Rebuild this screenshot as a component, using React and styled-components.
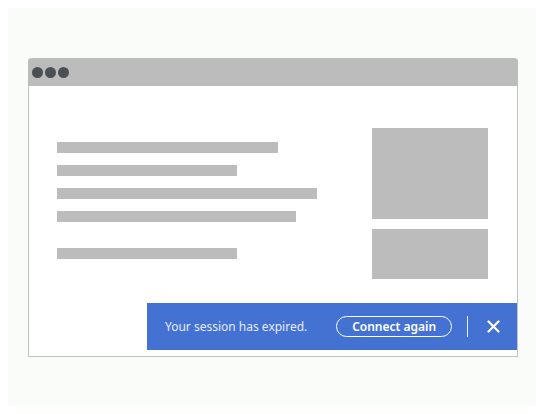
import React from "react";
import styled, { createGlobalStyle } from "styled-components";

const GlobalStyle = createGlobalStyle`
  body {
    margin: 8px;
    background: #ffffff;
    font-family: "Noto Sans", "Open Sans", sans-serif;
  }
`;

const lines = [
  { width: 221 },
  { width: 180 },
  { width: 260 },
  { width: 239 },
  { width: 180, gap: true },
];

const App = () => {
  return (
    <>
      <GlobalStyle />
      <Stage>
        <Window>
          <TitleBar>
            <Dot />
            <Dot />
            <Dot />
          </TitleBar>
          <Body>
            <TextColumn>
              {lines.map((line, i) => (
                <Line key={i} $width={line.width} $gap={line.gap} />
              ))}
            </TextColumn>
            <Aside>
              <Block $height={91} />
              <Block $height={50} />
            </Aside>
          </Body>
          <Toast>
            <Message>Your session has expired.</Message>
            <ConnectButton>Connect again</ConnectButton>
            <Divider />
            <CloseButton aria-label="Close">
              <svg width="13" height="13" viewBox="0 0 13 13">
                <path
                  d="M1.5 1.5 L11.5 11.5 M11.5 1.5 L1.5 11.5"
                  stroke="#ffffff"
                  strokeWidth="2.2"
                  strokeLinecap="round"
                />
              </svg>
            </CloseButton>
          </Toast>
        </Window>
      </Stage>
    </>
  );
};

const Stage = styled.div`
  width: 528px;
  height: 398px;
  background: #fafcf9;
  padding: 50px 0 0 20px;
  box-sizing: border-box;
`;

const Window = styled.div`
  position: relative;
  width: 490px;
  height: 299px;
  box-sizing: border-box;
  border: 1px solid #c2c2c2;
  border-top: none;
  border-radius: 4px 4px 0 0;
  background: #ffffff;
  display: flex;
  flex-direction: column;
`;

const TitleBar = styled.div`
  height: 28px;
  margin: 0 -1px;
  background: #bbbcbb;
  border-radius: 4px 4px 0 0;
  display: flex;
  align-items: center;
  gap: 2px;
  padding: 0 0 0 4px;
`;

const Dot = styled.span`
  width: 11px;
  height: 11px;
  border-radius: 50%;
  background: #4b5057;
`;

const Body = styled.div`
  flex: 1;
  display: flex;
  justify-content: space-between;
  align-items: flex-start;
  padding: 42px 29px 0 28px;
`;

const TextColumn = styled.div`
  display: flex;
  flex-direction: column;
  gap: 12px;
  padding-top: 14px;
`;

const Line = styled.div`
  width: ${(p) => p.$width}px;
  height: 11px;
  background: #bcbcbc;
  margin-top: ${(p) => (p.$gap ? "14px" : "0")};
`;

const Aside = styled.div`
  display: flex;
  flex-direction: column;
  gap: 10px;
`;

const Block = styled.div`
  width: 116px;
  height: ${(p) => p.$height}px;
  background: #bcbcbc;
`;

const Toast = styled.div`
  position: absolute;
  right: 0;
  bottom: 6px;
  width: 370px;
  height: 47px;
  box-sizing: border-box;
  background: #4472d2;
  display: flex;
  align-items: center;
  padding: 0 17px 0 18px;
`;

const Message = styled.span`
  font-size: 12px;
  color: #e4ebf8;
  white-space: nowrap;
`;

const ConnectButton = styled.button`
  margin-left: 29px;
  width: 117px;
  height: 21px;
  box-sizing: border-box;
  border: 1px solid #ffffff;
  border-radius: 11px;
  background: transparent;
  color: #ffffff;
  font-family: "Noto Sans", "Open Sans", sans-serif;
  font-size: 12px;
  font-weight: 600;
  padding: 0;
  line-height: 19px;
  cursor: pointer;
`;

const Divider = styled.span`
  width: 1px;
  height: 21px;
  margin-left: 15px;
  background: #e8eefa;
`;

const CloseButton = styled.button`
  margin-left: 19px;
  width: 13px;
  height: 13px;
  padding: 0;
  border: none;
  background: transparent;
  display: flex;
  cursor: pointer;
`;

export default App;
